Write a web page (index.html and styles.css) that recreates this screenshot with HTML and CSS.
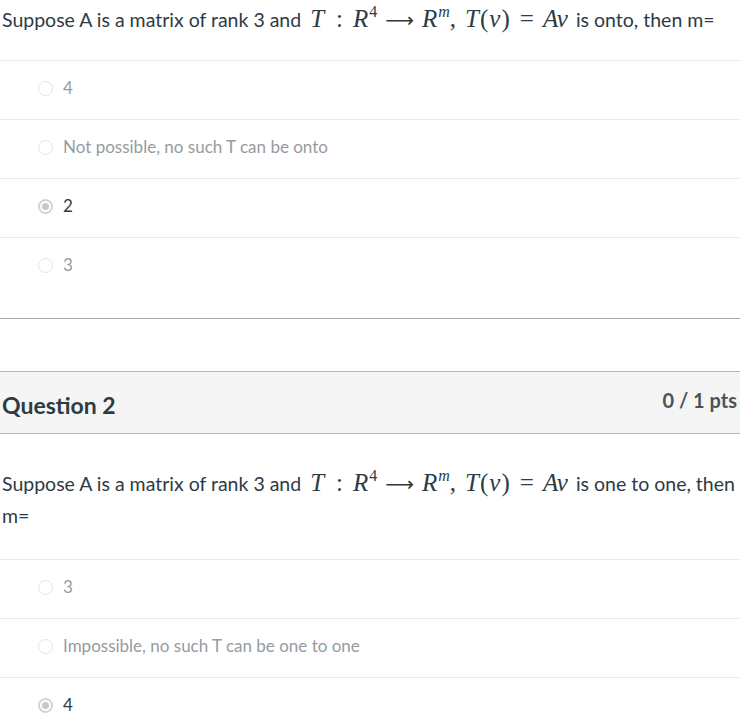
FILE: index.html
```html
<!DOCTYPE html>
<html>
<head>
  <title>Quiz Results</title>
  <link rel="stylesheet" href="styles.css">
</head>
<body>
  <div class="question">
    <div class="question-text first">
      <span>Suppose A is a matrix of rank 3 and</span>
      <span class="math"><i>T</i><span class="op colon">:</span><i>R</i><sup>4</sup><span class="op arrow">&#10230;</span><i>R</i><sup><i>m</i></sup><span class="comma">,</span><i>T</i><span class="paren">(</span><i>v</i><span class="paren">)</span><span class="op">=</span><i>A</i><i>v</i></span>
      <span>is onto, then m=</span>
    </div>
    <div class="answers">
      <div class="answer"><span class="radio"></span><span class="label">4</span></div>
      <div class="answer"><span class="radio"></span><span class="label">Not possible, no such T can be onto</span></div>
      <div class="answer selected"><span class="radio"></span><span class="label">2</span></div>
      <div class="answer"><span class="radio"></span><span class="label">3</span></div>
    </div>
  </div>

  <div class="question">
    <div class="question-header">
      <h2>Question 2</h2>
      <div class="points">0 / 1 pts</div>
    </div>
    <div class="question-text second">
      <span>Suppose A is a matrix of rank 3 and</span>
      <span class="math"><i>T</i><span class="op colon">:</span><i>R</i><sup>4</sup><span class="op arrow">&#10230;</span><i>R</i><sup><i>m</i></sup><span class="comma">,</span><i>T</i><span class="paren">(</span><i>v</i><span class="paren">)</span><span class="op">=</span><i>A</i><i>v</i></span>
      <span>is one to one, then</span>
      <span>m=</span>
    </div>
    <div class="answers">
      <div class="answer"><span class="radio"></span><span class="label">3</span></div>
      <div class="answer"><span class="radio"></span><span class="label">Impossible, no such T can be one to one</span></div>
      <div class="answer selected"><span class="radio"></span><span class="label">4</span></div>
    </div>
  </div>
</body>
</html>
```

FILE: styles.css
```css
body {
  margin: 0;
  font-family: Lato, "Liberation Sans", sans-serif;
  color: #2d3b45;
  background: #fff;
  overflow: hidden;
}

.question-text {
  font-size: 19.5px;
  line-height: 32px;
  padding-left: 2px;
  padding-right: 4px;
}

.question-text.first {
  padding-top: 4px;
  margin-bottom: 24px;
}

.question-text.second {
  padding-top: 34px;
  margin-bottom: 27px;
}

.math {
  font-family: "Liberation Serif", "DejaVu Serif", serif;
  font-size: 25px;
  line-height: 20px;
  margin: 0 3px 0 4px;
  white-space: nowrap;
}

.math i {
  font-style: italic;
}

.math sup {
  font-size: 16px;
  line-height: 0;
  vertical-align: 10px;
  margin-left: 1px;
}

.math .op {
  margin: 0 9px;
}

.math .colon {
  margin: 0 10px 0 12px;
}

.math .paren {
  margin: 0 1px;
}

.math .arrow {
  font-family: "DejaVu Sans", sans-serif;
  font-size: 20px;
  margin: 0 8px;
}

.math .comma {
  margin-right: 9px;
}

.answers {
  display: flex;
  flex-direction: column;
}

.answer {
  display: flex;
  align-items: center;
  line-height: 18px;
  padding: 18px 0 22px 38px;
  border-top: 1px solid #e8eaec;
  font-size: 17px;
  color: #969ba0;
}

.radio {
  width: 15px;
  height: 15px;
  border: 1px solid #e3e3e3;
  border-radius: 50%;
  background: #fff;
  margin-right: 10px;
  box-sizing: border-box;
  position: relative;
}

.answer.selected {
  color: #2d3b45;
}

.answer.selected .radio {
  border: 2px solid #d4d4d4;
}

.answer.selected .radio::after {
  content: "";
  position: absolute;
  top: 2px;
  left: 2px;
  width: 7px;
  height: 7px;
  border-radius: 50%;
  background: #c8c8c8;
}

.question:first-child {
  border-bottom: 1px solid #a8a8a8;
  padding-bottom: 22px;
  margin-bottom: 52px;
}

.question-header {
  display: flex;
  justify-content: space-between;
  align-items: flex-start;
  background: #f5f5f5;
  border-top: 1px solid #b5b5b5;
  border-bottom: 1px solid #b5b5b5;
  height: 61px;
  padding: 0 3px 0 2px;
}

.question-header h2 {
  margin: 0;
  font-size: 23px;
  font-weight: bold;
  line-height: 26px;
  padding-top: 20px;
}

.points {
  font-size: 20px;
  font-weight: bold;
  line-height: 22px;
  padding-top: 17px;
  color: #4a545c;
}
```
